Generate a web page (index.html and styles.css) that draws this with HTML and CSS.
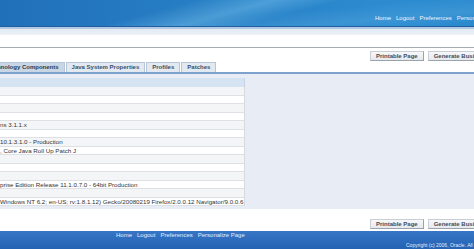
FILE: index.html
```html
<!DOCTYPE html>
<html>
<head>
<meta charset="utf-8">
<link rel="stylesheet" href="styles.css">
</head>
<body>
<div class="page">
  <header class="top">
    <nav class="global">
      <a>Home</a><a>Logout</a><a>Preferences</a><a>Personalize Page</a>
    </nav>
  </header>
  <div class="subband"></div>
  <div class="titlebar"></div>
  <div class="actions">
    <span class="btn">Printable Page</span>
    <span class="btn">Generate Business Report</span>
  </div>
  <div class="tabs">
    <span class="tab sel">Technology Components</span>
    <span class="tab">Java System Properties</span>
    <span class="tab">Profiles</span>
    <span class="tab">Patches</span>
  </div>
  <div class="content">
    <table class="grid">
      <thead><tr><th></th></tr></thead>
      <tbody>
        <tr><td></td></tr>
        <tr><td></td></tr>
        <tr><td></td></tr>
        <tr><td></td></tr>
        <tr><td>ns 3.1.1.x</td></tr>
        <tr><td></td></tr>
        <tr><td>10.1.3.1.0 - Production</td></tr>
        <tr><td>, Core Java Roll Up Patch J</td></tr>
        <tr><td></td></tr>
        <tr><td></td></tr>
        <tr><td></td></tr>
        <tr><td>prise Edition Release 11.1.0.7.0 - 64bit Production</td></tr>
        <tr><td></td></tr>
        <tr><td>Windows NT 6.2; en-US; rv:1.8.1.12) Gecko/20080219 Firefox/2.0.0.12 Navigator/9.0.0.6</td></tr>
      </tbody>
    </table>
  </div>
  <div class="actions bottom">
    <span class="btn">Printable Page</span>
    <span class="btn">Generate Business Report</span>
  </div>
  <footer class="foot">
    <nav class="footlinks">
      <a>Home</a><a>Logout</a><a>Preferences</a><a>Personalize Page</a>
    </nav>
    <div class="copy">Copyright (c) 2006, Oracle. All rights reserved.</div>
  </footer>
</div>
</body>
</html>
```

FILE: styles.css
```css
html, body {
  margin: 0;
  padding: 0;
}
body {
  overflow: hidden;
  background: #ffffff;
  font-family: "Liberation Sans", Arial, sans-serif;
  font-size: 6px;
  color: #333333;
}
.page {
  width: 560px;
}
.top {
  height: 27px;
  box-sizing: border-box;
  border-bottom: 1px solid #1f5f9f;
  background:
    linear-gradient(165deg, rgba(255,255,255,0) 30%, rgba(140,210,245,0.35) 42%, rgba(255,255,255,0) 52%),
    linear-gradient(175deg, rgba(255,255,255,0) 50%, rgba(90,170,225,0.35) 70%, rgba(255,255,255,0) 85%),
    linear-gradient(90deg, #2070b9 0%, #2880c5 40%, #2d8cd0 70%, #2987cb 100%);
  display: flex;
  align-items: flex-end;
}
.global {
  display: flex;
  gap: 5px;
  padding-left: 375px;
  padding-bottom: 4px;
  color: #eef5ff;
  line-height: 7px;
}
.subband {
  height: 8px;
  box-sizing: border-box;
  border-top: 2px solid #b3c9e3;
  background: linear-gradient(#e3eaf4, #edf1f7);
}
.titlebar {
  height: 12px;
  border-bottom: 1px solid #a3abb3;
}
.actions {
  display: flex;
  gap: 4px;
  padding-left: 370px;
  padding-top: 3px;
  height: 14px;
  box-sizing: border-box;
}
.btn {
  height: 10px;
  box-sizing: border-box;
  border: 1px solid #c9ced4;
  border-right-color: #9aa2ab;
  border-bottom-color: #9aa2ab;
  background: linear-gradient(#f6f7f8, #e6e9ec);
  padding: 0 5px;
  font-weight: bold;
  color: #3f4d5b;
  line-height: 8px;
  white-space: nowrap;
}
.tabs {
  display: flex;
  gap: 1px;
  margin-left: -19px;
  height: 10px;
  align-items: flex-end;
}
.tab {
  height: 10px;
  box-sizing: border-box;
  padding: 0 5px;
  border: 1px solid #b6c6d8;
  border-bottom: none;
  background: #e3e9f0;
  font-weight: bold;
  color: #35506e;
  line-height: 9px;
  white-space: nowrap;
}
.tab.sel {
  background: #c9d6e5;
  color: #2a3b4e;
}
.content {
  border-top: 2px solid #7ca2cd;
  background: #e8edf5;
  padding: 4px 0 3px 0;
}
.grid {
  border-collapse: collapse;
  width: 245px;
  background: #ffffff;
}
.grid th {
  height: 9px;
  padding: 0;
  background: #d5e3f2;
  border-right: 1px solid #c4d3e3;
}
.grid td {
  height: 7.5px;
  padding: 0;
  font-size: 6.2px;
  line-height: 7px;
  white-space: nowrap;
  overflow: hidden;
  border-bottom: 1px solid #dde1e6;
  border-right: 1px solid #d6dbe1;
  color: #333333;
  max-width: 245px;
}
.grid tbody tr:nth-child(odd) td {
  background: #f4f5f7;
}
.actions.bottom {
  padding-top: 10px;
  height: 22px;
}
.foot {
  height: 18px;
  background: linear-gradient(#3776c6, #2462b3);
  color: #e3ecfb;
}
.footlinks {
  display: flex;
  gap: 5px;
  padding-left: 116px;
  padding-top: 1px;
  line-height: 7px;
}
.copy {
  padding-left: 406px;
  padding-top: 3px;
  font-size: 5px;
  line-height: 7px;
  white-space: nowrap;
}
```
